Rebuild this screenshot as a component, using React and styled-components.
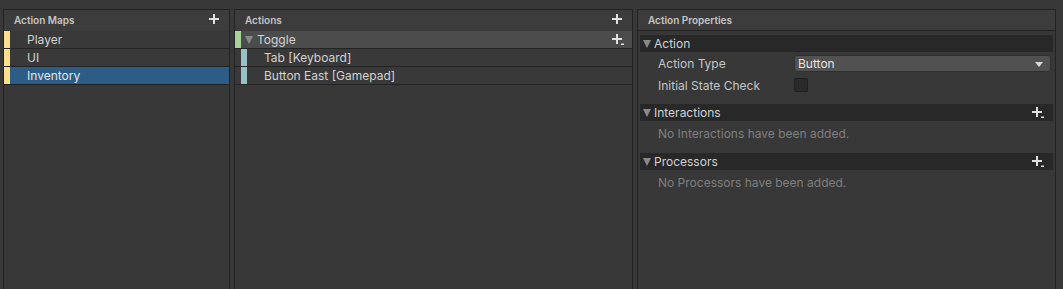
import React from 'react'
import styled, { createGlobalStyle } from 'styled-components'

const GlobalStyle = createGlobalStyle`
  html, body {
    margin: 0;
    padding: 0;
    background: #383838;
    font-family: "Inter", "Noto Sans", sans-serif;
    font-size: 12px;
    color: #d2d2d2;
  }
`

const Window = styled.div`
  display: flex;
  gap: 4px;
  height: 289px;
  box-sizing: border-box;
  padding: 9px 0 0 3px;
  overflow: hidden;
`

const Panel = styled.div`
  width: ${(p) => p.$width}px;
  box-sizing: border-box;
  border: 1px solid #232323;
  border-bottom: none;
  background: #383838;
  display: flex;
  flex-direction: column;
`

const Header = styled.div`
  height: 20px;
  flex-shrink: 0;
  display: flex;
  align-items: center;
  justify-content: space-between;
  padding: 0 7px 0 10px;
  background: #3c3c3c;
  border-bottom: 1px solid ${(p) => (p.$border ? '#232323' : 'transparent')};
  font-size: 10px;
  font-weight: 600;
  color: #c4c4c4;
`

const Row = styled.div`
  height: 17px;
  display: flex;
  align-items: center;
  border-bottom: 1px solid #242424;
  padding-right: ${(p) => (p.$highlight ? 7 : 0)}px;
  background: ${(p) => (p.$selected ? '#2c5d87' : p.$highlight ? '#4c4c4c' : '#393939')};
  color: ${(p) => (p.$selected ? '#e6e6e6' : '#d2d2d2')};
`

const Tag = styled.span`
  width: 6px;
  height: 100%;
  flex-shrink: 0;
  margin-left: ${(p) => p.$indent || 0}px;
  margin-right: ${(p) => p.$gap}px;
  background: ${(p) => p.$color};
`

const Label = styled.span`
  flex: 1;
  white-space: nowrap;
`

const Arrow = styled.span`
  width: 0;
  height: 0;
  border-left: ${(p) => (p.$small ? 4 : 4.5)}px solid transparent;
  border-right: ${(p) => (p.$small ? 4 : 4.5)}px solid transparent;
  border-top: ${(p) => (p.$small ? 5 : 8)}px solid ${(p) => p.$color || '#8a8a8a'};
  margin: 1px ${(p) => p.$after}px 0 ${(p) => p.$before}px;
`

const Body = styled.div`
  padding: 4px 2px 0 2px;
  display: flex;
  flex-direction: column;
`

const Foldout = styled.div`
  height: 17px;
  display: flex;
  align-items: center;
  background: #282828;
  color: #d2d2d2;
  margin-top: ${(p) => p.$top || 0}px;
  padding-right: 8px;
`

const Field = styled.div`
  display: grid;
  grid-template-columns: 136px 1fr;
  align-items: center;
  height: ${(p) => p.$height}px;
  padding: 0 2px 0 18px;
  color: #c4c4c4;
`

const Dropdown = styled.div`
  height: 17px;
  box-sizing: border-box;
  background: #515151;
  border: 1px solid #303030;
  border-radius: 3px;
  display: flex;
  align-items: center;
  justify-content: space-between;
  padding: 0 7px 0 3px;
  color: #e4e4e4;
`

const Checkbox = styled.div`
  width: 14px;
  height: 14px;
  box-sizing: border-box;
  background: #2a2a2a;
  border: 1px solid #202020;
  border-radius: 2px;
`

const Empty = styled.div`
  height: 24px;
  display: flex;
  align-items: center;
  padding-left: 18px;
  color: #7f7f7f;
`

const PlusIcon = ({ more }) => (
  <svg width="13" height="12" viewBox="0 0 13 12">
    <rect x="4" y="0" width="2" height="10" fill="#e0e0e0" />
    <rect x="0" y="4" width="10" height="2" fill="#e0e0e0" />
    {more && <rect x="9" y="9.5" width="3" height="1.5" fill="#e0e0e0" />}
  </svg>
)

function ActionMaps() {
  const maps = ['Player', 'UI', 'Inventory']
  return (
    <Panel $width={227}>
      <Header>
        Action Maps
        <PlusIcon />
      </Header>
      {maps.map((name) => (
        <Row key={name} $selected={name === 'Inventory'}>
          <Tag $color="#fbdf8e" $gap={17} />
          <Label>{name}</Label>
        </Row>
      ))}
    </Panel>
  )
}

function Actions() {
  const bindings = ['Tab [Keyboard]', 'Button East [Gamepad]']
  return (
    <Panel $width={399}>
      <Header>
        Actions
        <PlusIcon />
      </Header>
      <Row $highlight>
        <Tag $color="#a6d39a" />
        <Arrow $before={4} $after={4} />
        <Label>Toggle</Label>
        <PlusIcon more />
      </Row>
      {bindings.map((b) => (
        <Row key={b}>
          <Tag $color="#97c2c6" $indent={6} $gap={17} />
          <Label>{b}</Label>
        </Row>
      ))}
    </Panel>
  )
}

function Properties() {
  return (
    <Panel $width={419}>
      <Header $border>Action Properties</Header>
      <Body>
        <Foldout>
          <Arrow $before={3} $after={3} />
          <Label>Action</Label>
        </Foldout>
        <Field $height={23}>
          Action Type
          <Dropdown>
            Button
            <Arrow $small $color="#d8d8d8" $before={0} $after={0} />
          </Dropdown>
        </Field>
        <Field $height={20}>
          Initial State Check
          <Checkbox />
        </Field>
        <Foldout $top={9}>
          <Arrow $before={3} $after={3} />
          <Label>Interactions</Label>
          <PlusIcon more />
        </Foldout>
        <Empty>No Interactions have been added.</Empty>
        <Foldout $top={8}>
          <Arrow $before={3} $after={3} />
          <Label>Processors</Label>
          <PlusIcon more />
        </Foldout>
        <Empty>No Processors have been added.</Empty>
      </Body>
    </Panel>
  )
}

export default function App() {
  return (
    <>
      <GlobalStyle />
      <Window>
        <ActionMaps />
        <Actions />
        <Properties />
      </Window>
    </>
  )
}
